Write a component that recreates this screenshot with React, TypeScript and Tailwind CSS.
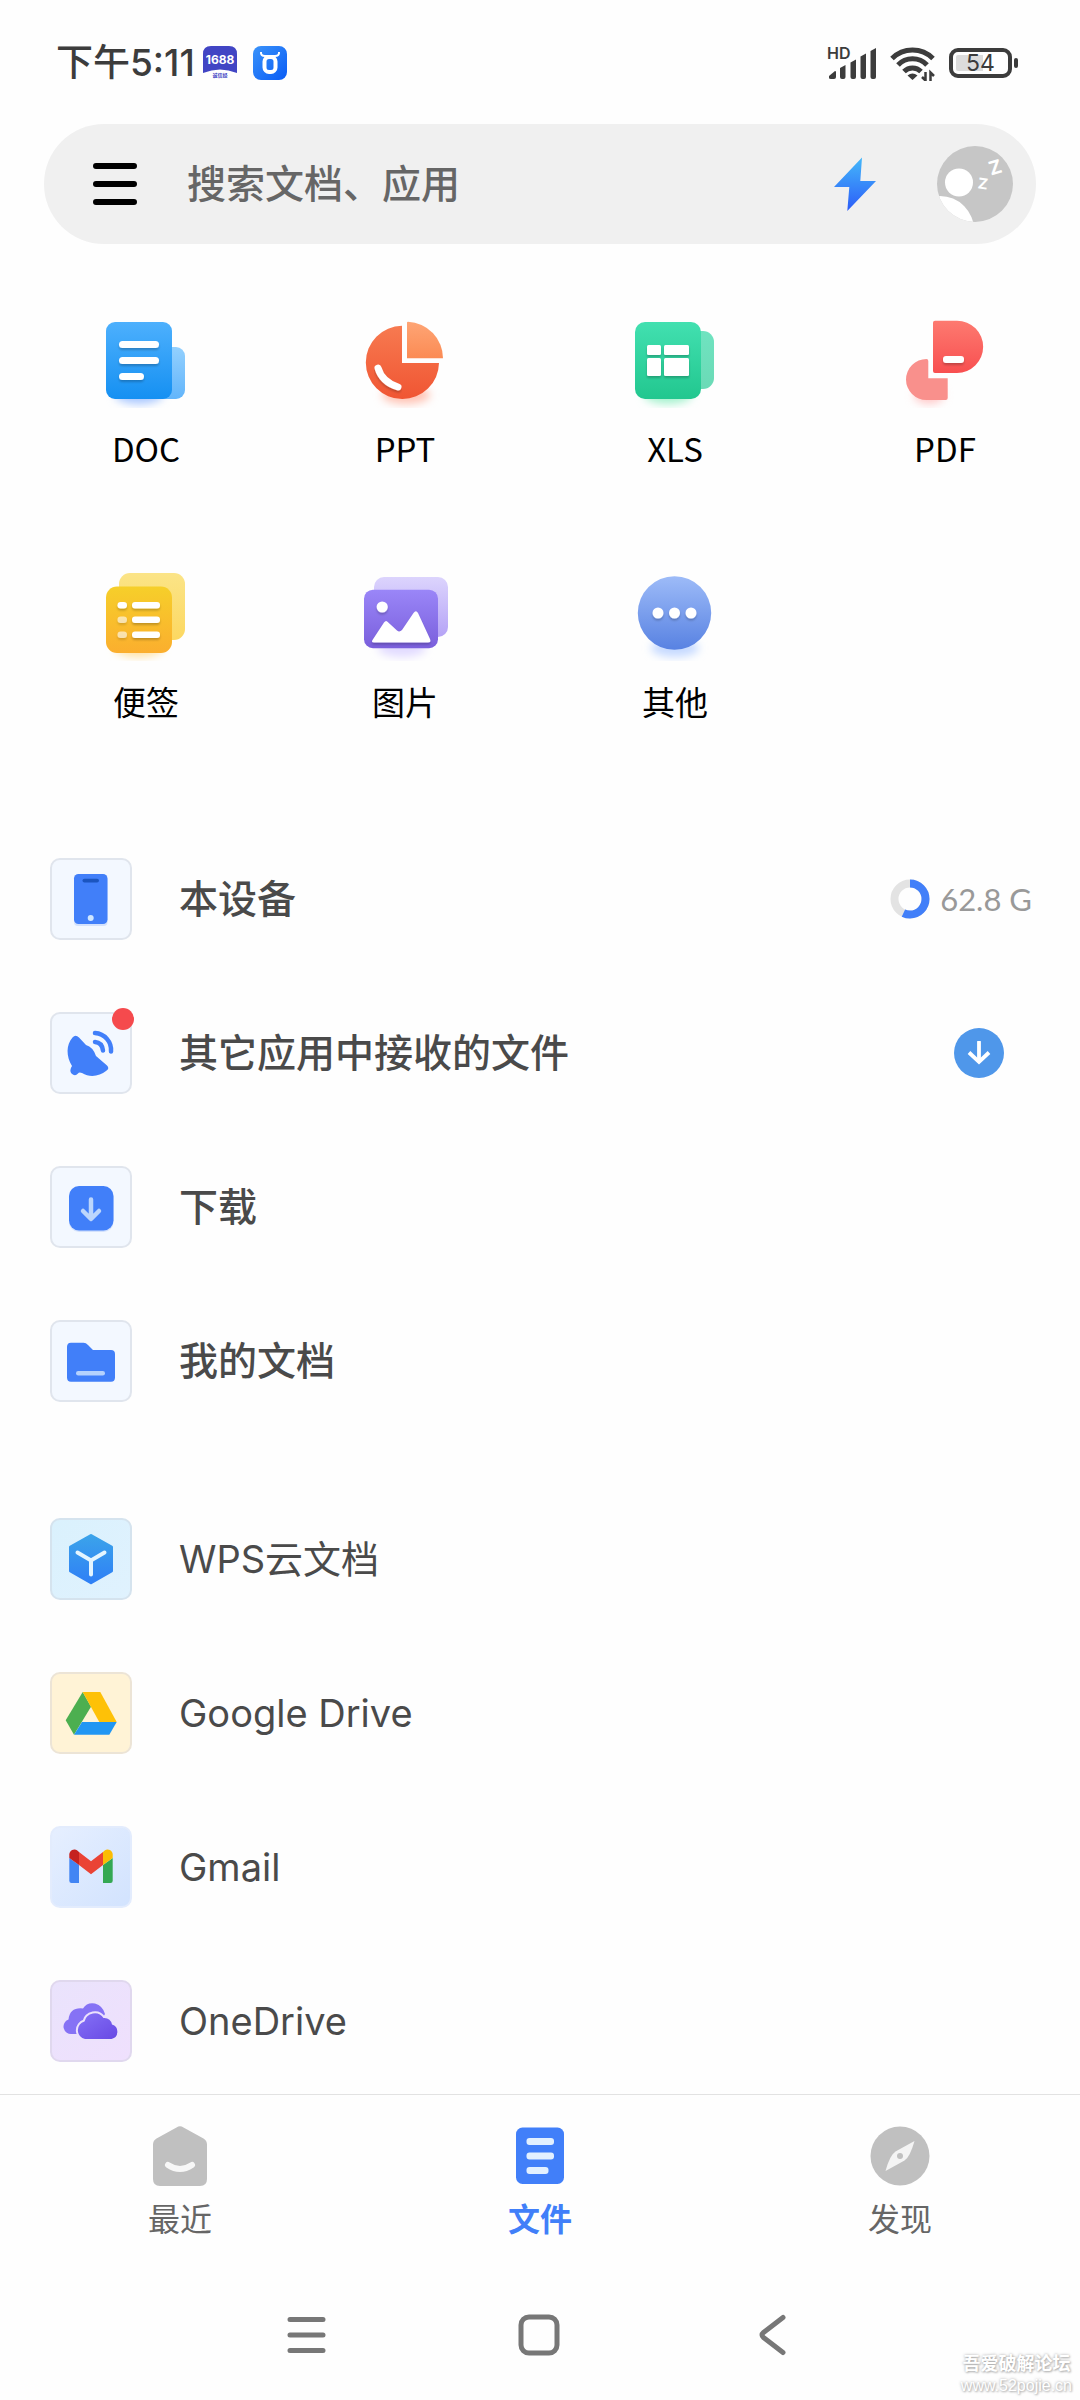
import { useState } from 'react';
import type { ReactNode } from 'react';

interface FileType {
  label: string;
  icon: ReactNode;
}

interface Location {
  label: string;
  tile: string;
  icon: ReactNode;
  badge?: boolean;
  extra?: ReactNode;
}

function Gradient({ id, from, to, diagonal }: { id: string; from: string; to: string; diagonal?: boolean }) {
  return (
    <linearGradient id={id} x1="0" y1="0" x2={diagonal ? '1' : '0'} y2="1">
      <stop offset="0" stopColor={from} />
      <stop offset="1" stopColor={to} />
    </linearGradient>
  );
}

function TypeIcon({ glow, cx = 38, rx = 24, children }: { glow: string; cx?: number; rx?: number; children: ReactNode }) {
  return (
    <svg viewBox="0 0 90 96" className="h-24 w-[90px]" aria-hidden="true">
      <defs>
        <filter id="glow" x="-40%" y="-80%" width="180%" height="260%">
          <feGaussianBlur stdDeviation="4" />
        </filter>
        <filter id="drop" x="-20%" y="-50%" width="140%" height="220%">
          <feDropShadow dx="0" dy="2" stdDeviation="1" floodColor="#000" floodOpacity="0.22" />
        </filter>
      </defs>
      <ellipse cx={cx} cy="83" rx={rx} ry="9" fill={glow} filter="url(#glow)" />
      {children}
    </svg>
  );
}

const fileTypes: FileType[] = [
  {
    label: 'DOC',
    icon: (
      <TypeIcon glow="#a9c8ff">
        <defs>
          <Gradient id="doc" from="#4db0fd" to="#1590f2" />
          <Gradient id="docBack" from="#93d0fe" to="#62b5fb" />
        </defs>
        <rect x="50" y="35" width="34" height="52" rx="9" fill="url(#docBack)" />
        <rect x="5" y="10" width="66" height="77" rx="9" fill="url(#doc)" />
        <g fill="#fff" filter="url(#drop)">
          <rect x="18" y="29" width="40" height="7" rx="3.5" />
          <rect x="18" y="45" width="40" height="7" rx="3.5" />
          <rect x="18" y="61" width="25" height="7" rx="3.5" />
        </g>
      </TypeIcon>
    ),
  },
  {
    label: 'PPT',
    icon: (
      <TypeIcon glow="#ffc3b4" cx={46}>
        <defs>
          <Gradient id="ppt" from="#f77a50" to="#f05533" />
          <Gradient id="pptSlice" from="#fea575" to="#fb8b54" />
        </defs>
        <path d="M42 51V13.8A36.6 36.6 0 1 0 79 51Z" fill="url(#ppt)" />
        <path d="M47 46.3V10.5Q47 9.7 48 9.7A36.5 36.5 0 0 1 83 46.3Z" fill="url(#pptSlice)" />
        <path d="M18 56Q22 70 38 75" fill="none" stroke="#fff" strokeWidth="7" strokeLinecap="round" filter="url(#drop)" />
      </TypeIcon>
    ),
  },
  {
    label: 'XLS',
    icon: (
      <TypeIcon glow="#a5f2ce">
        <defs>
          <Gradient id="xls" from="#42e0b0" to="#22c78f" />
          <Gradient id="xlsBack" from="#6fe3c0" to="#6bdab6" />
        </defs>
        <rect x="50" y="19" width="34" height="58" rx="11" fill="url(#xlsBack)" />
        <rect x="5" y="10" width="66" height="77" rx="10" fill="url(#xls)" />
        <g fill="#fff" filter="url(#drop)">
          <rect x="17" y="33" width="14" height="10" rx="1.5" />
          <rect x="34" y="33" width="25" height="10" rx="1.5" />
          <rect x="17" y="46" width="14" height="18" rx="1.5" />
          <rect x="34" y="46" width="25" height="18" rx="1.5" />
        </g>
      </TypeIcon>
    ),
  },
  {
    label: 'PDF',
    icon: (
      <TypeIcon glow="#ffc9c9" cx={29} rx={15}>
        <defs>
          <Gradient id="pdf" from="#fd7a70" to="#f84f50" />
        </defs>
        <path d="M28.3 49Q28.3 47 26.5 47A20.5 20.5 0 0 0 26.5 88H45.7Q47.7 88 47.7 86V66.3H28.3Z" fill="#f9908c" />
        <path d="M35 8.7H57A26.1 26.1 0 0 1 57 61H35Q33 61 33 59V10.7Q33 8.7 35 8.7Z" fill="url(#pdf)" />
        <rect x="43" y="44" width="21" height="7" rx="3" fill="#fff" filter="url(#drop)" />
      </TypeIcon>
    ),
  },
  {
    label: '便签',
    icon: (
      <TypeIcon glow="#ffe2a3">
        <defs>
          <Gradient id="note" from="#f6cf2a" to="#fbae2e" />
          <Gradient id="noteBack" from="#fbe487" to="#fcd861" />
        </defs>
        <rect x="18" y="8" width="66" height="67" rx="11" fill="url(#noteBack)" />
        <rect x="5" y="21.5" width="66" height="66.5" rx="11" fill="url(#note)" />
        <g fill="#fff" filter="url(#drop)">
          <rect x="31" y="37" width="28" height="6.5" rx="3" />
          <rect x="31" y="51.5" width="28" height="6.5" rx="3" />
          <rect x="31" y="66.5" width="28" height="6.5" rx="3" />
          <rect x="16.5" y="37" width="9.5" height="6.5" rx="3.2" />
          <rect x="16.5" y="51.5" width="9.5" height="6.5" rx="3.2" opacity="0.6" />
          <rect x="16.5" y="66.5" width="9.5" height="6.5" rx="3.2" opacity="0.6" />
        </g>
      </TypeIcon>
    ),
  },
  {
    label: '图片',
    icon: (
      <TypeIcon glow="#e2dbff" cx={42}>
        <defs>
          <Gradient id="img" from="#9a86f8" to="#7a5fdc" />
          <Gradient id="imgBack" from="#dcd4fd" to="#b5a3f6" />
        </defs>
        <rect x="14" y="12" width="74" height="60" rx="10" fill="url(#imgBack)" />
        <rect x="4" y="24.7" width="74" height="58.5" rx="9" fill="url(#img)" />
        <g fill="#fff" filter="url(#drop)">
          <circle cx="22.2" cy="42" r="5.6" />
          <path d="M12.5 75L24 57.5Q26 54.5 28.3 57.5L37 65.5Q39.5 67.5 42 65L53.5 48Q56 44.5 58 48L70 74Q71.5 77.5 68 77.5H14Q11 77.5 12.5 75Z" />
        </g>
      </TypeIcon>
    ),
  },
  {
    label: '其他',
    icon: (
      <TypeIcon glow="#c6daff" cx={45}>
        <defs>
          <Gradient id="other" from="#9dbbf8" to="#5882e2" />
        </defs>
        <circle cx="44.5" cy="48" r="36.7" fill="url(#other)" />
        <g fill="#fff" filter="url(#drop)">
          <circle cx="28" cy="48" r="5.5" />
          <circle cx="44.5" cy="48" r="5.5" />
          <circle cx="61" cy="48" r="5.5" />
        </g>
      </TypeIcon>
    ),
  },
];

const BLUE_TILE = 'border-[#e0e5ed] bg-[#f3f8ff]';

const localPlaces: Location[] = [
  {
    label: '本设备',
    tile: BLUE_TILE,
    icon: (
      <>
        <rect x="24" y="18" width="33.5" height="50" rx="4" fill="#d3e1fc" />
        <rect x="24" y="16" width="33.5" height="50" rx="4.5" fill="#417ff9" />
        <rect x="32.5" y="20.7" width="16.5" height="3.8" rx="1.9" fill="#1b55bf" />
        <circle cx="40.7" cy="60" r="3" fill="#cfe6ff" />
      </>
    ),
    extra: (
      <span className="flex items-center gap-2.5 text-[#999]">
        <svg viewBox="0 0 40 40" className="size-10" aria-hidden="true">
          <circle cx="20" cy="20" r="15.5" fill="none" stroke="#e3e3e3" strokeWidth="8" />
          <circle
            cx="20"
            cy="20"
            r="15.5"
            fill="none"
            stroke="#417ff9"
            strokeWidth="8"
            pathLength="100"
            strokeDasharray="57 43"
            transform="rotate(-90 20 20)"
          />
        </svg>
        <span className="font-['Lato',sans-serif] text-[31px] leading-10">62.8 G</span>
      </span>
    ),
  },
  {
    label: '其它应用中接收的文件',
    tile: BLUE_TILE,
    badge: true,
    icon: (
      <>
        <path
          d="M22.5 25.5Q25.5 22 29 25.5L36 33Q43 35 46 44L57 53.5Q60 56.5 56 59C50 64 40 66 32 61Q29 60 28 61.5Q25 65 21.5 61.5Q19 58.5 22 54C16 44 16 33 22.5 25.5Z"
          fill="#417ff9"
        />
        <path d="M45 21A17 17 0 0 1 61 39.5" fill="none" stroke="#417ff9" strokeWidth="4.5" strokeLinecap="round" />
        <path d="M45 30Q52 30.5 53 38.5" fill="none" stroke="#417ff9" strokeWidth="4.5" strokeLinecap="round" />
      </>
    ),
    extra: (
      <button type="button" aria-label="接收文件" className="mr-7 flex size-[50px] items-center justify-center rounded-full bg-[#4f97ea]">
        <svg viewBox="0 0 24 24" className="size-6" fill="none" stroke="#fff" strokeWidth="3.8" aria-hidden="true">
          <path d="M12 1V20" strokeLinecap="round" />
          <path d="M2 11.5L12 21L22 11.5" />
        </svg>
      </button>
    ),
  },
  {
    label: '下载',
    tile: BLUE_TILE,
    icon: (
      <>
        <rect x="19" y="21.5" width="44.5" height="44.5" rx="10" fill="#d3e1fc" />
        <rect x="19" y="20" width="44.5" height="44.5" rx="10" fill="#417ff9" />
        <path
          d="M41 33.5V52M33 45L41 53L49 45"
          fill="none"
          stroke="#bcd6fc"
          strokeWidth="4.5"
          strokeLinecap="round"
          strokeLinejoin="round"
        />
      </>
    ),
  },
  {
    label: '我的文档',
    tile: BLUE_TILE,
    icon: (
      <>
        <path d="M17 27Q17 22.7 21 22.7H33.5Q36 22.7 38 25L43 30H61Q65 30 65 34V57.5Q65 61.7 61 61.7H21Q17 61.7 17 57.5Z" fill="#417ff9" />
        <rect x="26" y="51" width="29" height="4.5" rx="2.2" fill="#b5d2fd" />
      </>
    ),
  },
];

const cloudPlaces: Location[] = [
  {
    label: 'WPS云文档',
    tile: 'border-[#d5e3ee] bg-linear-to-br from-[#daf1fd] to-[#e0f2fe]',
    icon: (
      <>
        <defs>
          <Gradient id="wps" from="#3ba3ea" to="#2f80f6" />
        </defs>
        <path
          d="M41 17.5L61.5 29V53L41 64.7L20.5 53V29Z"
          fill="url(#wps)"
          stroke="url(#wps)"
          strokeWidth="3"
          strokeLinejoin="round"
        />
        <path d="M27.5 34.5L41 42.5L54.5 34.5M41 42.5V56.5" fill="none" stroke="#e4f5ff" strokeWidth="4" strokeLinecap="round" />
      </>
    ),
  },
  {
    label: 'Google Drive',
    tile: 'border-[#ece4d6] bg-[#fff3d6]',
    icon: (
      <>
        <path d="M32.7 20L41 34.7L24 62.7L15.7 48.3Z" fill="#4caf50" />
        <path d="M32.7 20H50.3L66.7 50H49.3Z" fill="#fec107" />
        <path d="M32 50H66.7L59.3 62.7H24Z" fill="#2196f3" />
      </>
    ),
  },
  {
    label: 'Gmail',
    tile: 'border-[#e3ecfd] bg-linear-to-br from-[#e6efff] to-[#d2e3fe]',
    icon: (
      <>
        <path d="M19.3 32L29 39V57H21.5Q19.3 57 19.3 54.8Z" fill="#4285f4" />
        <path d="M62.7 32L53 39V57H60.5Q62.7 57 62.7 54.8Z" fill="#34a853" />
        <path d="M29 26L41 35.3L53 26V39L41 48.2L29 39Z" fill="#ea4335" />
        <path d="M19.3 32V28A5 5 0 0 1 27 24.3L29 26V39Z" fill="#c5221f" />
        <path d="M62.7 32V28A5 5 0 0 0 55 24.3L53 26V39Z" fill="#fbbc04" />
      </>
    ),
  },
  {
    label: 'OneDrive',
    tile: 'border-[#e0d8ee] bg-linear-to-br from-[#eae3fc] to-[#efe0fd]',
    icon: (
      <>
        <defs>
          <Gradient id="cloud" from="#8571f6" to="#6849e4" diagonal />
        </defs>
        <path d="M22 54A7.5 7.5 0 0 1 18.5 39.5Q20 27 33 28.5Q37 22 45 23.5Q53 26 55 34L50 42L30 54Z" fill="#8672f5" />
        <path
          d="M35 59A9 9 0 0 1 34.5 41.5A10.5 10.5 0 0 1 53.5 38Q60.5 37.5 62 44.5A7.5 7.5 0 0 1 61.5 59Z"
          fill="url(#cloud)"
          stroke="#ece2fc"
          strokeWidth="4"
          paintOrder="stroke"
        />
      </>
    ),
  },
];

const tabs = [
  {
    label: '最近',
    icon: (
      <>
        <path d="M28.5 3.5Q32 1 35.5 3.5L55.5 14.5Q59 16.5 59 20.5V55Q59 62 52 62H12Q5 62 5 55V20.5Q5 16.5 8.5 14.5Z" fill="#c0c0c0" />
        <path d="M20 41Q32 49 44 41" fill="none" stroke="#f7f7f7" strokeWidth="6" strokeLinecap="round" />
      </>
    ),
  },
  {
    label: '文件',
    icon: (
      <>
        <rect x="8" y="3.5" width="48" height="56.5" rx="6.5" fill="#417ff9" />
        <g fill="#e2f0ff">
          <rect x="18.5" y="14" width="27.5" height="7" rx="3" />
          <rect x="18.5" y="28.5" width="27.5" height="7" rx="3" />
          <rect x="18.5" y="43" width="22" height="7" rx="3" />
        </g>
      </>
    ),
  },
  {
    label: '发现',
    icon: (
      <>
        <circle cx="32" cy="32" r="29.5" fill="#c0c0c0" />
        <path d="M46.5 17Q42 33 36.5 36.5L17.5 47Q22 31 27.5 27.5Z" fill="#f4f4f4" />
        <circle cx="32" cy="32" r="3" fill="#c0c0c0" />
      </>
    ),
  },
];

function StatusBar() {
  return (
    <div className="flex h-[124px] items-center pt-0.5 pr-[62px] pl-14 text-[#3c3c3c]">
      <span className="text-[37px] leading-[56px] font-medium">下午5:11</span>
      <svg viewBox="0 0 34 34" className="ml-2 size-[34px]" aria-hidden="true">
        <path d="M0 8Q0 0 8 0H26Q34 0 34 8V27Q17 20 0 27Z" fill="#4145c4" />
        <text x="17" y="18" textAnchor="middle" fontSize="12" fontWeight="700" fill="#fff">
          1688
        </text>
        <text x="17" y="31" textAnchor="middle" fontSize="5" fontWeight="700" fill="#4145c4">
          诚信经
        </text>
      </svg>
      <svg viewBox="0 0 34 34" className="ml-4 size-[34px]" aria-hidden="true">
        <defs>
          <Gradient id="bull" from="#3a93fa" to="#0a5cf5" diagonal />
        </defs>
        <rect width="34" height="34" rx="8" fill="url(#bull)" />
        <rect x="11.5" y="11" width="11" height="15" rx="4.500" fill="none" stroke="#fff" strokeWidth="4" />
        <path d="M8 6Q7.5 10 12 10H22Q26.5 10 26 6" fill="none" stroke="#fff" strokeWidth="2" />
      </svg>

      <div className="ml-auto flex items-center">
        <svg viewBox="0 0 50 38" className="h-[38px] w-[50px]" fill="currentColor" aria-hidden="true">
          <text x="0" y="15" fontSize="16" fontWeight="600">
            HD
          </text>
          <path d="M2 34V32L8 27Q9 27 9 28V33Q9 35 7 35H4Q2 35 2 34Z" />
          <path d="M13 24L18.5 21V33Q18.5 35 16.5 35H15Q13 35 13 33Z" />
          <path d="M23.5 18.5L29 15.5V33Q29 35 27 35H25.5Q23.5 35 23.5 33Z" />
          <path d="M33.5 12.5L39 9.5V33Q39 35 37 35H35.5Q33.5 35 33.5 33Z" />
          <path d="M43.500 7L49 4V33Q49 35 47 35H45.500Q43.500 35 43.500 33Z" />
        </svg>
        <svg viewBox="0 0 48 36" className="ml-3 h-9 w-12" fill="none" stroke="currentColor" strokeWidth="5" aria-hidden="true">
          <path d="M3 13.5A29 29 0 0 1 44 13.5" />
          <path d="M9 20A20 20 0 0 1 38 20" />
          <path d="M15 26.5A12 12 0 0 1 32 26.5" />
          <path d="M18.5 30.5Q23.5 26.5 28.5 30.5L23.5 35Z" fill="currentColor" stroke="none" />
          <path d="M36.5 27V35.5L33 32M41.5 36V27.5L45 31" strokeWidth="2.5" />
        </svg>
        <div className="ml-3 flex h-[30px] w-[63px] items-center justify-center rounded-[9px] border-4 border-current bg-linear-to-r from-[#dcdcdc] from-55% to-white to-55% bg-origin-content bg-clip-content p-[3px]">
          <span className="text-[23px] leading-none">54</span>
        </div>
        <span className="ml-0.5 h-2.5 w-1 rounded-sm bg-current" />
      </div>
    </div>
  );
}

function SearchBar() {
  return (
    <div className="mx-11 flex h-[120px] items-center rounded-full bg-[#f0f0f0] pr-[23px] pl-[49px]">
      <button type="button" aria-label="菜单">
        <svg viewBox="0 0 44 44" className="size-11" stroke="#000" strokeWidth="6" strokeLinecap="round" aria-hidden="true">
          <path d="M3 4H41M3 22H41M3 40H41" />
        </svg>
      </button>
      <input
        type="text"
        aria-label="搜索文档、应用"
        placeholder="搜索文档、应用"
        className="ml-[50px] min-w-0 flex-1 bg-transparent text-[39px] leading-[56px] font-medium text-[#666] outline-none placeholder:text-[#666]"
      />
      <button type="button" aria-label="快捷工具">
        <svg viewBox="0 0 42 54" className="h-[54px] w-[42px]" aria-hidden="true">
          <defs>
            <Gradient id="bolt" from="#44b8fa" to="#2c5cf8" />
          </defs>
          <path d="M28 0.5L26.3 24H42L13.3 54L15.3 30H0Z" fill="url(#bolt)" />
        </svg>
      </button>
      <button type="button" aria-label="账户" className="ml-[61px]">
        <svg viewBox="0 0 76 76" className="size-[76px]" aria-hidden="true">
          <clipPath id="avatar">
            <circle cx="38" cy="38" r="38" />
          </clipPath>
          <g clipPath="url(#avatar)">
            <rect width="76" height="76" fill="#c6c6c6" />
            <circle cx="22" cy="36.5" r="14" fill="#fff" />
            <circle cx="3" cy="84" r="34" fill="#fff" />
          </g>
          <g fill="#fff" fontWeight="700" textAnchor="middle">
            <text x="46" y="43" fontSize="15" transform="rotate(8 46 38)">
              Z
            </text>
            <text x="58.5" y="28" fontSize="19" transform="rotate(-16 58.5 22)">
              Z
            </text>
          </g>
        </svg>
      </button>
    </div>
  );
}

function LocationList({ items, labelClass }: { items: Location[]; labelClass: string }) {
  return (
    <ul>
      {items.map((item) => (
        <li key={item.label} className="flex items-center justify-between py-9 pr-12 pl-[50px]">
          <a href="#" className="flex min-w-0 flex-1 items-center gap-[47px]">
            <span className={`relative size-[82px] shrink-0 rounded-[10px] border-2 ${item.tile}`}>
              <svg viewBox="2 2 78 78" className="size-full" aria-hidden="true">
                {item.icon}
              </svg>
              {item.badge && <span className="absolute -top-1.5 -right-1 size-[22px] rounded-full bg-[#f54a4d]" />}
            </span>
            <span className={`leading-[56px] text-[#4a4a4a] ${labelClass}`}>{item.label}</span>
          </a>
          {item.extra}
        </li>
      ))}
    </ul>
  );
}

export default function App() {
  const [activeTab, setActiveTab] = useState('文件');

  return (
    <div className="relative flex min-h-screen flex-col bg-[#fefefe] font-['Inter','Noto_Sans_CJK_SC',sans-serif]">
      <StatusBar />
      <SearchBar />

      <main className="-mb-1 flex-1">
        <div className="mt-[68px] mb-[97px] grid grid-cols-4 gap-y-[93px]">
          {fileTypes.map((type) => (
            <a key={type.label} href="#" className="flex flex-col items-center nth-[4n+1]:pl-[22px]">
              {type.icon}
              <span className="mt-4 font-['Noto_Sans_CJK_SC',sans-serif] text-[33px] leading-[48px] text-black">
                {type.label}
              </span>
            </a>
          ))}
        </div>

        <LocationList items={localPlaces} labelClass="text-[39px] font-medium" />
        <div className="h-11" />
        <LocationList items={cloudPlaces} labelClass="text-[38px]" />
      </main>

      <footer className="sticky bottom-0 border-t border-[#e2e2e2] bg-[#fefefe] pb-[41px]">
        <nav className="grid grid-cols-3 pt-[29px]">
          {tabs.map((tab) => (
            <button
              key={tab.label}
              type="button"
              onClick={() => setActiveTab(tab.label)}
              className={`flex flex-col items-center text-[32px] leading-[48px] ${
                activeTab === tab.label ? 'font-bold text-[#417ff9]' : 'text-[#666]'
              }`}
            >
              <svg viewBox="0 0 64 64" className="mb-2 size-16" aria-hidden="true">
                {tab.icon}
              </svg>
              {tab.label}
            </button>
          ))}
        </nav>

        <div className="mt-[67px] flex justify-center gap-[185px] text-[#777]">
          <button type="button" aria-label="最近任务">
            <svg viewBox="0 0 48 48" className="size-12" stroke="currentColor" strokeWidth="5" strokeLinecap="round" aria-hidden="true">
              <path d="M7 8.5H40M7 24H40M7 39.5H40" />
            </svg>
          </button>
          <button type="button" aria-label="主屏幕">
            <svg viewBox="0 0 48 48" className="size-12" fill="none" stroke="currentColor" strokeWidth="5" aria-hidden="true">
              <rect x="5" y="6" width="36" height="36" rx="8" />
            </svg>
          </button>
          <button type="button" aria-label="返回">
            <svg viewBox="0 0 48 48" className="size-12" fill="none" stroke="currentColor" strokeWidth="5" strokeLinecap="round" aria-hidden="true">
              <path d="M34 6.5L14.5 21.5Q11.5 24 14.5 26.5L34 41.5" />
            </svg>
          </button>
        </div>

        <div className="absolute right-2 bottom-1 text-center font-['Liberation_Sans','Noto_Sans_CJK_SC',sans-serif] text-white [text-shadow:0_0_3px_#aaa,1px_1px_2px_#bbb]">
          <p className="text-[18px] leading-6 font-bold">吾爱破解论坛</p>
          <p className="text-[16px] leading-5">www.52pojie.cn</p>
        </div>
      </footer>
    </div>
  );
}
